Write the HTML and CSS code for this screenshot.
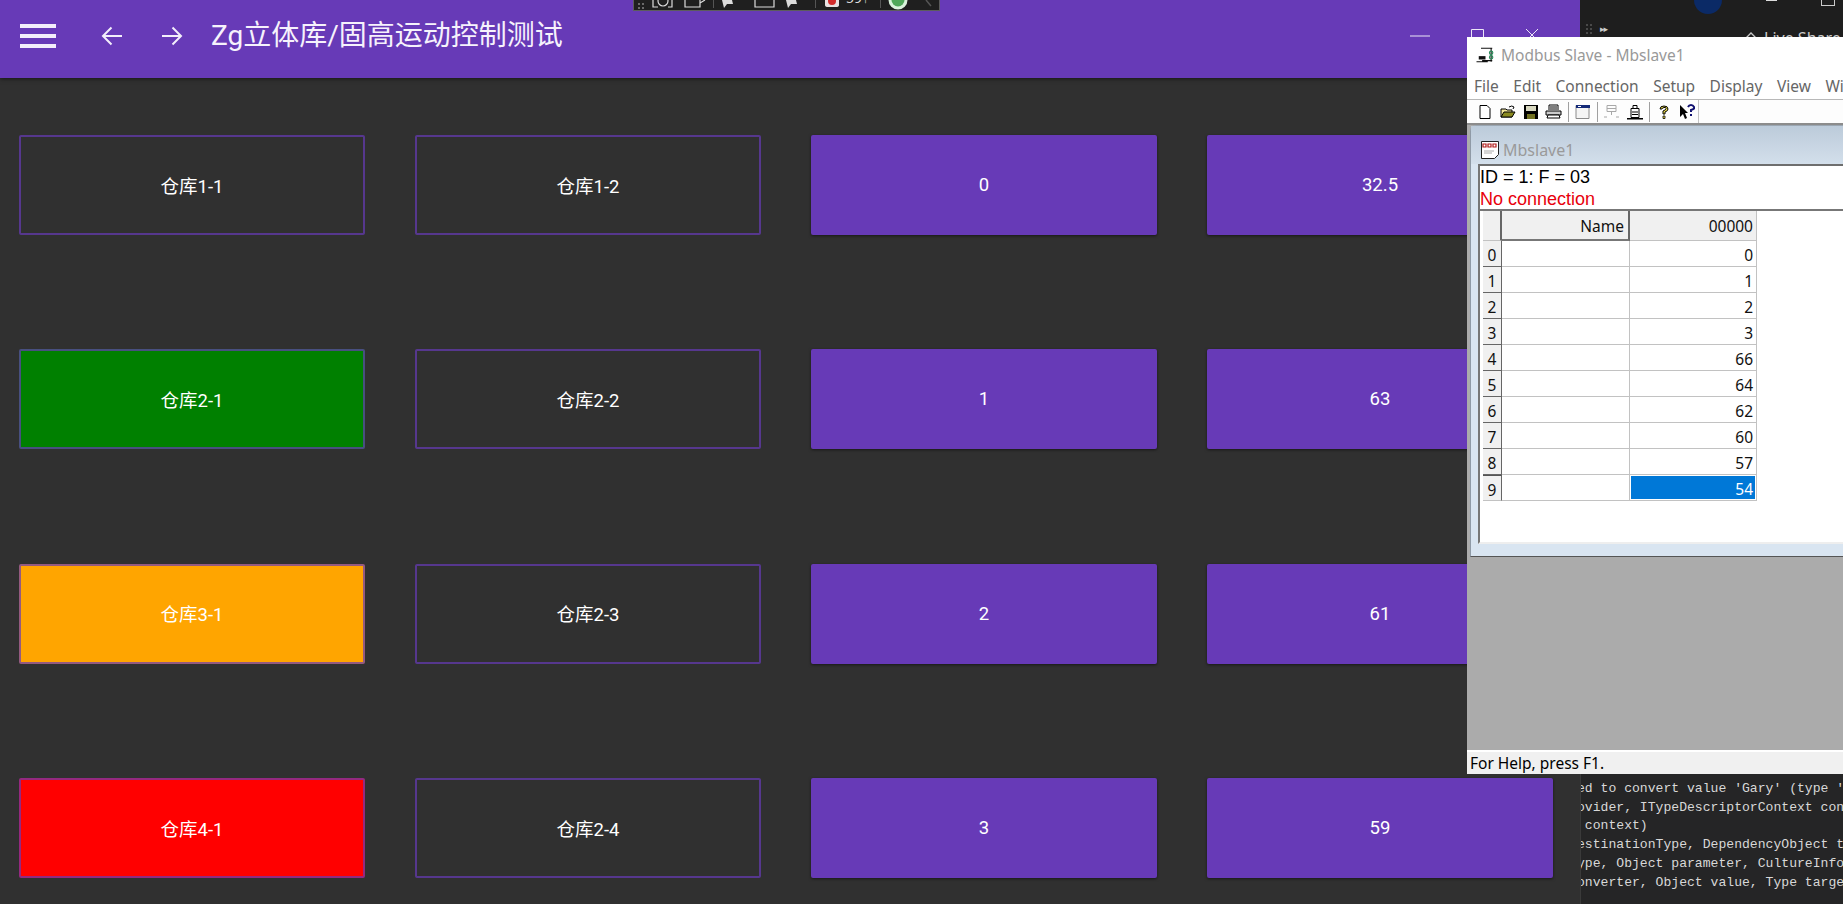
FILE: index.html
```html
<!DOCTYPE html>
<html lang="zh-CN">
<head>
<meta charset="utf-8">
<title>Zg立体库/固高运动控制测试</title>
<link rel="stylesheet" href="styles.css">
</head>
<body>
<div class="desktop">
  <main class="app">
    <header class="appbar">
      <svg class="menu-icon" width="36" height="24" viewBox="0 0 36 24"><path d="M0 0h36v4H0zM0 10h36v4H0zM0 20h36v4H0z" fill="#f3eefb"/></svg>
      <svg class="arrow arrow-back" width="22" height="20" viewBox="0 0 22 20"><path d="M21 10H2M10.500 1.500 2 10l8.500 8.500" fill="none" stroke="#f3eefb" stroke-width="2"/></svg>
      <svg class="arrow arrow-forward" width="22" height="20" viewBox="0 0 22 20"><path d="M1 10h19M11.500 1.500 20 10l-8.500 8.500" fill="none" stroke="#f3eefb" stroke-width="2"/></svg>
      <h1 class="app-title">Zg立体库/固高运动控制测试</h1>
      <div class="win-controls">
        <svg width="20" height="16" viewBox="0 0 20 16"><path d="M0 8h20" stroke="#ece6f6" stroke-width="1"/></svg>
        <svg width="13" height="16" viewBox="0 0 13 16"><path d="M.5 1.500h12v13H.5z" fill="none" stroke="#ece6f6"/></svg>
        <svg width="14" height="16" viewBox="0 0 14 16"><path d="m1 1 12 12M13 1 1 13" fill="none" stroke="#ece6f6"/></svg>
      </div>
    </header>
    <section class="grid">
      <div class="card outline">仓库1-1</div>
      <div class="card outline">仓库1-2</div>
      <div class="card filled">0</div>
      <div class="card filled">32.5</div>
      <div class="card green">仓库2-1</div>
      <div class="card outline">仓库2-2</div>
      <div class="card filled">1</div>
      <div class="card filled">63</div>
      <div class="card orange">仓库3-1</div>
      <div class="card outline">仓库2-3</div>
      <div class="card filled">2</div>
      <div class="card filled">61</div>
      <div class="card red">仓库4-1</div>
      <div class="card outline">仓库2-4</div>
      <div class="card filled">3</div>
      <div class="card filled">59</div>
    </section>
  </main>

  <aside class="ide">
    <div class="ide-top">
      <div class="ide-row1">
        <span class="avatar"></span>
        <span class="ide-bar"></span>
        <span class="ide-copy"></span>
      </div>
      <div class="ide-row2">
        <span class="grip"></span>
        <span class="chev">▸▸</span>
        <svg class="share-icon" width="18" height="16" viewBox="0 0 18 16"><path d="M1 14V9M5 9l6-6 6 6" fill="none" stroke="#c8c8c8" stroke-width="1.300"/></svg>
        <span class="share-text">Live Share</span>
      </div>
    </div>
    <div class="log">
      <div>ed to convert value 'Gary' (type '</div>
      <div>ovider, ITypeDescriptorContext con</div>
      <div> context)</div>
      <div>estinationType, DependencyObject t</div>
      <div>ype, Object parameter, CultureInfo</div>
      <div>onverter, Object value, Type targe</div>
    </div>
  </aside>

  <div class="float-bar">
    <svg width="306" height="10" viewBox="0 0 306 10">
      <g fill="#6a6a6a"><rect x="4" y="3" width="2" height="2"/><rect x="8" y="3" width="2" height="2"/><rect x="4" y="7" width="2" height="2"/><rect x="8" y="7" width="2" height="2"/></g>
      <g fill="none" stroke="#dcdcdc" stroke-width="1.200">
        <path d="M19 0v7h5M38 0v7h-4"/><circle cx="29" cy="1" r="5"/>
        <path d="M51 0v7h15V0M66 3l5-3"/>
        <path d="M121 0v7h19V0"/>
      </g>
      <g fill="#dcdcdc"><path d="M88 0l2 8 3-4 6 0-1-4zM152 0l2 8 3-4 6 0-1-4z"/></g>
      <g fill="#555"><rect x="79" y="0" width="1" height="8"/><rect x="181" y="0" width="1" height="8"/><rect x="246" y="0" width="1" height="8"/></g>
      <path d="M191 0v5q0 2 3 2h8q3 0 3-2V0z" fill="#e8e2e2"/><circle cx="198" cy="1" r="4" fill="#d22b2b"/>
      <text class="float-num" x="212" y="3">59↑</text>
      <circle cx="264" cy="0" r="9.500" fill="#d9f2dc"/><circle cx="264" cy="0" r="6.500" fill="#4fa85a"/>
      <path d="M292 0l5 6" stroke="#555" stroke-width="1.500"/>
    </svg>
  </div>

  <section class="modbus">
    <div class="mb-title">
      <svg width="19" height="18" viewBox="0 0 16 16"><g fill="none" stroke="#111"><path d="M4 2h10M13 2v12M5 13h9M0 14h10"/><circle cx="13" cy="6" r="1.500" stroke="#2a8a5a"/><circle cx="13" cy="10" r="1.500" stroke="#2a8a5a"/></g><path d="M2 9h6v3H2z" fill="#111"/></svg>
      <span>Modbus Slave - Mbslave1</span>
    </div>
    <nav class="mb-menu">
      <span>File</span><span>Edit</span><span>Connection</span><span>Setup</span><span>Display</span><span>View</span><span>Window</span>
    </nav>
    <div class="mb-toolbar">
      <div class="tb-btn"><svg width="16" height="16" viewBox="0 0 16 16"><path d="M3 1.500h7l3 3v10H3z" fill="#fff" stroke="#000"/></svg></div>
      <div class="tb-btn"><svg width="16" height="16" viewBox="0 0 16 16"><path d="M1 13V5h5l1 1h5v7z" fill="#f3e79a" stroke="#000"/><path d="M1 13l3-5h11l-3 5z" fill="#8a8a20" stroke="#000"/><path d="M9 3q3-2 5 0l-1 2" fill="none" stroke="#000"/></svg></div>
      <div class="tb-btn"><svg width="16" height="16" viewBox="0 0 16 16"><path d="M1 1h14v14H1z" fill="#000"/><path d="M3 2h10v5H3z" fill="#d8d8c0"/><path d="M4 10h8v5H4z" fill="#707020"/></svg></div>
      <div class="tb-btn"><svg width="17" height="16" viewBox="0 0 17 16"><path d="M4 6V1h9v5" fill="#fff" stroke="#000"/><path d="M1 7h15v4H1z" fill="#ccc" stroke="#000"/><path d="M3 11h11l1 3H2z" fill="#fff" stroke="#000"/><path d="M5 3h7M5 5h7" stroke="#000"/></svg></div>
      <span class="tb-sep"></span>
      <div class="tb-btn"><svg width="15" height="16" viewBox="0 0 15 16"><path d="M1 1.500h13v13H1z" fill="#f4f4f4" stroke="#8a8a8a"/><path d="M1 1h14v3H1z" fill="#142a78"/><path d="M3 2h3v1H3z" fill="#fff"/></svg></div>
      <span class="tb-sep"></span>
      <div class="tb-btn"><svg width="17" height="16" viewBox="0 0 17 16"><g fill="none" stroke="#a8a8a8"><path d="M4 1.500h9v6H4zM4 4.500h9M8.500 8v3M1 13h3M13 13h3"/></g></svg></div>
      <div class="tb-btn"><svg width="16" height="16" viewBox="0 0 16 16"><g fill="none" stroke="#000"><path d="M6 1.500h4v3H6zM4 4.500h8v9H4zM5 8h6M5 10.500h6"/></g><path d="M0 14h16v1.500H0z" fill="#000"/></svg></div>
      <span class="tb-sep"></span>
      <div class="tb-btn"><svg width="14" height="16" viewBox="0 0 14 16"><path d="M3 5q0-3 4-3t4 3q0 2-3 3v2H6V7q3-1 3-2.500T7 3.500 5 5z" fill="#f5e44a" stroke="#000" stroke-width="1"/><path d="M6 12h2v2.500H6z" fill="#f5e44a" stroke="#000" stroke-width=".8"/></svg></div>
      <div class="tb-btn"><svg width="16" height="16" viewBox="0 0 16 16"><path d="M1 1v12l3-3 2 5 2-1-2-5h3z" fill="#000"/><path d="M9 3q1-2 3-2t3 2-3 3v2" fill="none" stroke="#101070" stroke-width="2"/><path d="M11 10h2v2h-2z" fill="#101070"/></svg></div>
    </div>
    <div class="mdi">
      <article class="child">
        <header class="child-title">
          <svg width="20" height="20" viewBox="0 0 20 20"><path d="M1.500 1.500h17v13l-4 4h-13z" fill="#fff" stroke="#222"/><path d="M3 4h3v3H3zM8 4h3v3H8zM13 4h3v3h-3z" fill="none" stroke="#b01818" stroke-width="1.200"/><path d="M4 11h10M4 13h8" stroke="#aaa"/></svg>
          <span>Mbslave1</span>
        </header>
        <div class="child-body">
          <div class="status-text">
            <div class="status-id">ID = 1: F = 03</div>
            <div class="status-conn">No connection</div>
          </div>
          <div class="sheet-wrap">
            <div class="sheet">
              <div class="c corner"></div><div class="c head head-name">Name</div><div class="c head head-addr">00000</div>
              <div class="c rowh">0</div><div class="c"></div><div class="c val">0</div>
              <div class="c rowh">1</div><div class="c"></div><div class="c val">1</div>
              <div class="c rowh">2</div><div class="c"></div><div class="c val">2</div>
              <div class="c rowh">3</div><div class="c"></div><div class="c val">3</div>
              <div class="c rowh">4</div><div class="c"></div><div class="c val">66</div>
              <div class="c rowh">5</div><div class="c"></div><div class="c val">64</div>
              <div class="c rowh">6</div><div class="c"></div><div class="c val">62</div>
              <div class="c rowh">7</div><div class="c"></div><div class="c val">60</div>
              <div class="c rowh">8</div><div class="c"></div><div class="c val">57</div>
              <div class="c rowh rowh-last">9</div><div class="c"></div><div class="c val selected"><span>54</span></div>
            </div>
          </div>
        </div>
      </article>
    </div>
    <footer class="mb-status">For Help, press F1.</footer>
  </section>
</div>
</body>
</html>
```
FILE: styles.css
```css
* { box-sizing: border-box; }
html, body { margin: 0; padding: 0; }
body { width: 1843px; height: 904px; overflow: hidden; background: #303030; }

.desktop { position: relative; display: flex; width: 1843px; height: 904px; overflow: hidden; }

/* Main app window */
.app { width: 1580px; height: 904px; background: #303030; overflow: hidden; font-family: Roboto, "Noto Sans CJK SC", sans-serif; color: #fff; }
.appbar { display: flex; align-items: center; height: 78px; padding: 0 0 7px 20px; background: #673ab7; box-shadow: 0 1px 4px rgba(0,0,0,.55); position: relative; }
.arrow-back { margin-left: 45px; }
.arrow-forward { margin-left: 38px; }
.app-title { margin: 0 0 0 28px; font-size: 28px; font-weight: 400; line-height: 36px; color: #f6f2fc; white-space: nowrap; }
.win-controls { display: flex; gap: 41px; margin-left: auto; padding: 0 41px 0 0; align-self: flex-start; margin-top: 28px; }

.grid { display: grid; grid-template-columns: repeat(4, 346px); grid-auto-rows: 100px; column-gap: 50px; row-gap: 114.400px; padding: 57px 0 0 19px; }
.card { display: flex; align-items: center; justify-content: center; padding-bottom: 1px; font-size: 18.500px; border-radius: 2px; border: 2px solid rgba(103,58,183,.7); color: #fff; }
.outline { background: transparent; }
.filled { padding-bottom: 0; background: #673ab7; border-color: #673ab7; box-shadow: 0 1px 3px rgba(0,0,0,.5); }
.green { background: #008000; }
.orange { background: #ffa500; }
.red { background: #ff0000; }

/* IDE behind */
.ide { flex: 1; display: flex; flex-direction: column; justify-content: space-between; background: #1e1e1e; height: 904px; overflow: hidden; color: #ccc; }
.ide-top { height: 60px; }
.ide-row1 { display: flex; height: 24px; padding-left: 114px; }
.avatar { width: 28px; height: 28px; margin-top: -14px; border-radius: 50%; background: #0b2a66; }
.ide-bar { width: 11px; height: 1px; margin-left: 44px; background: #ddd; }
.ide-copy { width: 14px; height: 6px; margin-left: 44px; border: 1px solid #ccc; border-top: 0; }
.ide-row2 { display: flex; align-items: center; height: 28px; padding-left: 6px; }
.grip { width: 6px; height: 10px; align-self: flex-start; opacity: .6; border-left: 2px dotted #666; border-right: 2px dotted #666; }
.chev { margin-left: 8px; font: 9px "DejaVu Sans", sans-serif; color: #ccc; letter-spacing: -1px; align-self: flex-start; }
.share-icon { margin-left: 133px; }
.share-text { margin-left: 6px; font: 16px "Noto Sans", sans-serif; white-space: nowrap; }

.log { height: 130px; padding-top: 6px; background: #252526; border-left: 1px solid #3a3a3a; overflow: hidden; font: 13.100px/18.700px "Liberation Mono", monospace; color: #d8d8d8; }
.log div { margin-left: -4px; white-space: pre; }

/* Floating toolbar */
.float-bar { position: absolute; left: 633px; top: 0; width: 307px; height: 11px; background: #1f1f1f; border: 1px solid #5c5c5c; border-top: 0; overflow: hidden; }
.float-bar svg { display: block; }
.float-num { font: 14px "Noto Sans", sans-serif; fill: #ddd; }

/* Modbus Slave */
.modbus { position: absolute; left: 1467px; top: 37px; width: 376px; height: 737px; display: flex; flex-direction: column; background: #fff; color: #000; font-family: "Noto Sans", sans-serif; font-size: 15px; }
.mb-title { display: flex; align-items: center; gap: 6px; height: 36px; padding-left: 9px; color: #999; font-size: 15.500px; white-space: nowrap; }
.mb-menu { display: flex; gap: 14.500px; height: 26px; align-items: center; padding-left: 7px; color: #666; font-size: 15.500px; white-space: nowrap; overflow: hidden; }
.mb-toolbar { display: flex; align-items: center; height: 26px; padding-left: 6px; border-top: 1px solid #b8b8b8; border-bottom: 2px solid #8c8c8c; background: #fdfdfd; }
.tb-btn { display: flex; align-items: center; justify-content: center; width: 23px; height: 23px; }
.tb-sep { width: 6px; height: 20px; background: linear-gradient(#a0a0a0, #a0a0a0) center / 1px 100% no-repeat; }
.mb-toolbar .tb-btn:last-child { border-right: 1px solid #c4c4c4; width: 24px; }
.mdi { flex: 1; background: #ababab; padding: 0 0 0 3px; border-bottom: 2px solid #fff; }
.child { display: flex; flex-direction: column; height: 432px; padding: 0 0 12px 7px; background: #d9e5f1; border-top: 1px solid #9aa6b2; border-left: 1px solid #8f9aa6; border-bottom: 1px solid #555; border-top-left-radius: 6px; }
.child-title { display: flex; align-items: center; gap: 3px; height: 38px; margin: 0 0 0 -7px; padding: 9px 0 0 9px; background: linear-gradient(#bccbda, #d3dfeb); color: #9a9a9a; font-size: 16px; }
.child-body { flex: 1; background: #fff; border-top: 2px solid #6e6e6e; border-left: 2px solid #777; border-bottom: 2px solid #eee; }
.status-text { height: 43px; font-family: "Liberation Sans", sans-serif; font-size: 18px; line-height: 22px; }
.status-conn { color: #e8000c; }
.sheet-wrap { border-top: 2px solid #777; padding-left: 2px; }
.sheet { display: grid; grid-template-columns: 19px 128px 127px; grid-template-rows: 30px repeat(10, 26px); width: 274px; margin-left: 1px; font-size: 15.500px; }
.c { border-right: 1px solid #c2c2c2; border-bottom: 1px solid #c2c2c2; line-height: 28px; text-align: right; padding-right: 3px; white-space: nowrap; color: #111; }
.corner { background: #f0f0f0; border-right: 2px solid #666; }
.head { background: #f0f0f0; line-height: 31px; }
.head-name { border-right: 2px solid #666; border-bottom: 2px solid #777; padding-right: 4px; }
.rowh { background: #f0f0f0; text-align: center; padding: 0; border-right: 1px solid #666; border-bottom: 1px solid #666; }
.rowh-last { border-bottom: 1px solid #c2c2c2; border-top: 1px solid #555; }
.selected { padding: 1px; }
.selected span { display: block; height: 23px; line-height: 26px; overflow: hidden; background: #0078d7; color: #fff; padding-right: 2px; }
.mb-status { height: 22px; padding-left: 3px; background: #f0f0f0; font-size: 15.500px; line-height: 22px; white-space: nowrap; }
```
